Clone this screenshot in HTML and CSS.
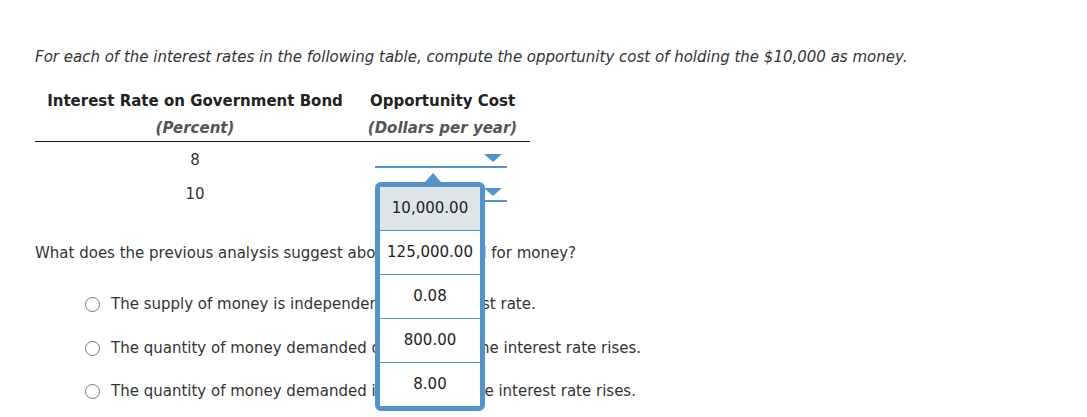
FILE: index.html
```html
<!DOCTYPE html>
<html lang="en">
<head>
  <meta charset="UTF-8">
  <title>Opportunity cost</title>
  <link rel="stylesheet" href="styles.css">
</head>
<body>
<div class="question">
  <p class="intro">For each of the interest rates in the following table, compute the opportunity cost of holding the $10,000 as money.</p>

  <table class="rates">
    <thead>
      <tr>
        <th class="col-rate">Interest Rate on Government Bond</th>
        <th class="col-cost">Opportunity Cost</th>
      </tr>
      <tr class="units">
        <th>(Percent)</th>
        <th>(Dollars per year)</th>
      </tr>
    </thead>
    <tbody>
      <tr>
        <td>8</td>
        <td><div class="dropdown"><span class="caret"></span></div></td>
      </tr>
      <tr>
        <td>10</td>
        <td>
          <div class="dropdown open">
            <span class="caret"></span>
            <ul class="menu">
              <li class="current">10,000.00</li>
              <li>125,000.00</li>
              <li>0.08</li>
              <li>800.00</li>
              <li>8.00</li>
            </ul>
          </div>
        </td>
      </tr>
    </tbody>
  </table>

  <p class="ask">What does the previous analysis suggest about the demand for money?</p>

  <ul class="choices">
    <li><span class="radio"></span>The supply of money is independent of the interest rate.</li>
    <li><span class="radio"></span>The quantity of money demanded decreases as the interest rate rises.</li>
    <li><span class="radio"></span>The quantity of money demanded increases as the interest rate rises.</li>
  </ul>
</div>
</body>
</html>
```

FILE: styles.css
```css
* {
  margin: 0;
  padding: 0
}

ul {
  list-style: none
}

body {
  font-family: Verdana, "DejaVu Sans", sans-serif;
  font-size: 15px;
  line-height: 18px;
  color: #333;
  background-color: #fff;
}

.question {
  padding-left: 35px;
}

.intro {
  margin-top: 48px;
  font-style: italic;
}

.rates {
  margin-top: 21px;
  border-collapse: collapse;
}

.rates th {
  height: 27px;
  padding: 0;
  color: #222;
  font-weight: bold;
  text-align: center;
  vertical-align: middle;
}

.rates .col-rate {
  width: 320px;
}

.rates .col-cost {
  width: 175px;
}

.rates .units th {
  color: #555;
  font-style: italic;
  border-bottom: 1px solid #111;
}

.rates td {
  height: 34px;
  padding: 0;
  text-align: center;
  vertical-align: top;
}

.rates td:first-child {
  padding-top: 9px;
  height: 25px;
}

/* select box */
.dropdown {
  position: relative;
  display: flex;
  justify-content: flex-end;
  align-items: flex-start;
  width: 132px;
  height: 26px;
  margin-left: 20px;
  padding-top: 12px;
  box-sizing: border-box;
  border-bottom: 2px solid #5493c7;
}

.caret {
  width: 0;
  height: 0;
  margin-right: 5px;
  border-left: 9px solid transparent;
  border-right: 9px solid transparent;
  border-top: 8px solid #5493c7;
}

.menu {
  position: absolute;
  top: 6px;
  left: 0;
  z-index: 2;
  width: 110px;
  border: 5px solid #5493c7;
  border-radius: 6px;
  background-color: #fff;
  box-sizing: border-box;
}

.menu::before {
  content: "";
  position: absolute;
  top: -14px;
  left: 45px;
  border-left: 8px solid transparent;
  border-right: 8px solid transparent;
  border-bottom: 9px solid #5493c7;
}

.menu li {
  height: 43px;
  line-height: 43px;
  color: #222;
  text-align: center;
  border-top: 1px solid #5493c7;
}

.menu li:first-child {
  border-top: 0;
}

.menu li.current {
  background-color: #dde5e9;
}

.ask {
  margin-top: 34px;
}

.choices {
  margin-top: 20px;
}

.choices li {
  display: flex;
  align-items: center;
  height: 44px;
}

.choices li:last-child {
  height: 42px;
}

.radio {
  width: 15px;
  height: 15px;
  margin-left: 50px;
  margin-right: 11px;
  border: 1px solid #777;
  border-radius: 50%;
  box-sizing: border-box;
}
```
